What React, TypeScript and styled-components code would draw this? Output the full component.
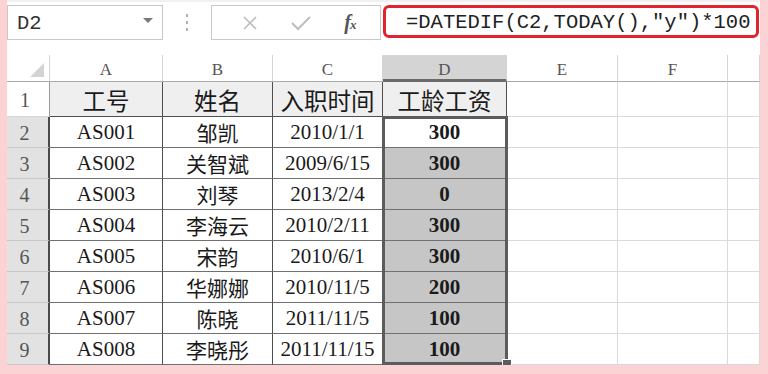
import React from 'react';
import styled, { createGlobalStyle, css } from 'styled-components';

const GlobalStyle = createGlobalStyle`
  html, body {
    margin: 0;
    padding: 0;
    background: #fbd3d5;
  }
`;

const SERIF = `"Liberation Serif", "Noto Sans CJK SC", serif`;
const CJK = `"Noto Sans CJK SC", "Liberation Serif", sans-serif`;
const MONO = `"Liberation Mono", "DejaVu Sans Mono", monospace`;

const Frame = styled.div`
  width: 768px;
  height: 374px;
  box-sizing: border-box;
  padding: 0 8px 9px 7px;
  background: #fbd3d5;
  overflow: hidden;
`;

const Sheet = styled.div`
  background: #ffffff;
  height: 100%;
  display: flex;
  flex-direction: column;
  overflow: hidden;
`;

const FormulaBar = styled.div`
  display: flex;
  align-items: flex-start;
  height: 38px;
  padding-top: 3px;
  margin-bottom: 17px;
  box-sizing: border-box;
  border-top: 2px solid #f1f1f1;
`;

const NameBox = styled.div`
  width: 156px;
  height: 35px;
  box-sizing: border-box;
  border: 1px solid #c9c9c9;
  display: flex;
  align-items: center;
  justify-content: space-between;
  padding: 2px 9px 0 9px;
  font-family: ${MONO};
  font-size: 20.5px;
  color: #333;
`;

const DropArrow = styled.span`
  width: 0;
  height: 0;
  border-left: 5px solid transparent;
  border-right: 5px solid transparent;
  border-top: 5px solid #7a7a7a;
  margin-top: -6px;
`;

const Grip = styled.div`
  width: 48px;
  height: 35px;
  display: flex;
  flex-direction: column;
  align-items: center;
  justify-content: center;
  gap: 4px;
`;

const GripDot = styled.span`
  width: 2px;
  height: 3px;
  background: #b0b0b0;
`;

const FxBox = styled.div`
  width: 170px;
  height: 35px;
  box-sizing: border-box;
  border: 1px solid #c9c9c9;
  display: flex;
  align-items: center;
  justify-content: space-around;
  padding: 0 8px 0 14px;
`;

const FxLabel = styled.span`
  font-family: ${SERIF};
  font-style: italic;
  font-weight: bold;
  font-size: 20px;
  color: #555;
  letter-spacing: -1px;
  small {
    font-size: 13px;
  }
`;

const FormulaInput = styled.div`
  flex: 1;
  margin: 0 1px 0 2px;
  height: 33px;
  box-sizing: border-box;
  border: 3px solid #e0232c;
  border-radius: 6px;
  display: flex;
  align-items: center;
  padding: 1px 0 0 20px;
  font-family: ${MONO};
  font-size: 20.5px;
  color: #222;
  white-space: nowrap;
`;

const GridWrap = styled.div`
  position: relative;
`;

const Grid = styled.div`
  display: grid;
  grid-template-columns: 43px 113px 110px 110px 124px 111px 110px 1fr;
  grid-template-rows: 27px 35px repeat(8, 31px);
`;

type Kind = 'corner' | 'col' | 'row' | 'title' | 'data' | 'empty';

const Cell = styled.div<{
  $kind: Kind;
  $on?: boolean;
  $fill?: boolean;
  $bold?: boolean;
  $cjk?: boolean;
  $dark?: boolean;
}>`
  box-sizing: border-box;
  display: flex;
  align-items: center;
  justify-content: center;
  white-space: nowrap;
  overflow: hidden;
  border-right: 1px solid #dadada;
  border-bottom: 1px solid #dadada;
  color: #1a1a1a;
  font-family: ${(p) => (p.$cjk ? CJK : SERIF)};
  font-size: 21px;
  font-weight: ${(p) => (p.$bold ? 'bold' : 'normal')};

  ${(p) =>
    p.$kind === 'corner' &&
    css`
      position: relative;
      border-right-color: #d6d6d6;
      border-bottom-color: #a9a9a9;
    `}

  ${(p) =>
    p.$kind === 'col' &&
    css`
      padding-top: 4px;
      font-size: 17px;
      color: #555;
      border-right-color: #d6d6d6;
      border-bottom: 1px solid #a9a9a9;
    `}

  ${(p) =>
    p.$kind === 'col' &&
    p.$on &&
    css`
      background: #d4d4d4;
      border-bottom: 3px solid #6a6a6a;
      padding-top: 6px;
    `}

  ${(p) =>
    p.$kind === 'row' &&
    css`
      padding: 3px 6px 0 0;
      font-size: 20px;
      color: #555;
      border-right: 1px solid ${p.$on ? '#4a4a4a' : '#9a9a9a'};
      border-bottom-color: ${p.$on ? '#c8c8c8' : '#d6d6d6'};
      background: ${p.$on ? '#e2e2e2' : '#ffffff'};
    `}

  ${(p) =>
    p.$kind === 'row' &&
    p.$dark &&
    css`
      border-right-width: 2px;
    `}

  ${(p) =>
    p.$kind === 'title' &&
    css`
      background: #efefef;
      font-size: 23.5px;
      padding-top: 1px;
      border-right-color: #4f4f4f;
      border-bottom-color: #4f4f4f;
    `}

  ${(p) =>
    p.$kind === 'data' &&
    css`
      border-right-color: #4f4f4f;
      border-bottom-color: #707070;
      background: ${p.$fill ? '#c6c6c6' : '#ffffff'};
    `}
`;

const CornerMark = styled.span`
  position: absolute;
  right: 5px;
  bottom: 4px;
  width: 0;
  height: 0;
  border-left: 14px solid transparent;
  border-bottom: 14px solid #d3d3d3;
`;

const Selection = styled.div`
  position: absolute;
  left: 375px;
  top: 61px;
  width: 126px;
  height: 249px;
  box-sizing: border-box;
  border: 3px solid #5c5c5c;
  pointer-events: none;
`;

const FillHandle = styled.span`
  position: absolute;
  right: -7px;
  bottom: -7px;
  width: 8px;
  height: 8px;
  background: #5c5c5c;
  border: 1px solid #ffffff;
`;

const COLS = ['A', 'B', 'C', 'D', 'E', 'F', ''];
const TITLES = ['工号', '姓名', '入职时间', '工龄工资'];

const ROWS: [string, string, string, string][] = [
  ['AS001', '邹凯', '2010/1/1', '300'],
  ['AS002', '关智斌', '2009/6/15', '300'],
  ['AS003', '刘琴', '2013/2/4', '0'],
  ['AS004', '李海云', '2010/2/11', '300'],
  ['AS005', '宋韵', '2010/6/1', '300'],
  ['AS006', '华娜娜', '2010/11/5', '200'],
  ['AS007', '陈晓', '2011/11/5', '100'],
  ['AS008', '李晓彤', '2011/11/15', '100'],
];

function Empties({ prefix }: { prefix: string }) {
  return (
    <>
      {[0, 1, 2].map((i) => (
        <Cell key={`${prefix}-e${i}`} $kind="empty" />
      ))}
    </>
  );
}

export default function App() {
  return (
    <Frame>
      <GlobalStyle />
      <Sheet>
        <FormulaBar>
          <NameBox>
            <span>D2</span>
            <DropArrow />
          </NameBox>
          <Grip>
            <GripDot />
            <GripDot />
            <GripDot />
          </Grip>
          <FxBox>
            <svg width="16" height="16" viewBox="0 0 16 16">
              <path d="M2 2 L14 14 M14 2 L2 14" stroke="#bdbdbd" strokeWidth="1.6" fill="none" />
            </svg>
            <svg width="20" height="16" viewBox="0 0 20 16">
              <path d="M1 8 L7 14 L19 2" stroke="#bdbdbd" strokeWidth="2" fill="none" />
            </svg>
            <FxLabel>
              f<small>x</small>
            </FxLabel>
          </FxBox>
          <FormulaInput>=DATEDIF(C2,TODAY(),″y″)*100</FormulaInput>
        </FormulaBar>

        <GridWrap>
          <Grid>
            <Cell $kind="corner">
              <CornerMark />
            </Cell>
            {COLS.map((c, i) => (
              <Cell key={`col-${i}`} $kind="col" $on={c === 'D'}>
                {c}
              </Cell>
            ))}

            <Cell $kind="row">1</Cell>
            {TITLES.map((t) => (
              <Cell key={t} $kind="title" $cjk>
                {t}
              </Cell>
            ))}
            <Empties prefix="r1" />

            {ROWS.map((r, i) => (
              <React.Fragment key={r[0]}>
                <Cell $kind="row" $on $dark>
                  {i + 2}
                </Cell>
                <Cell $kind="data">{r[0]}</Cell>
                <Cell $kind="data" $cjk>
                  {r[1]}
                </Cell>
                <Cell $kind="data">{r[2]}</Cell>
                <Cell $kind="data" $bold $fill={i > 0}>
                  {r[3]}
                </Cell>
                <Empties prefix={r[0]} />
              </React.Fragment>
            ))}
          </Grid>
          <Selection>
            <FillHandle />
          </Selection>
        </GridWrap>
      </Sheet>
    </Frame>
  );
}
